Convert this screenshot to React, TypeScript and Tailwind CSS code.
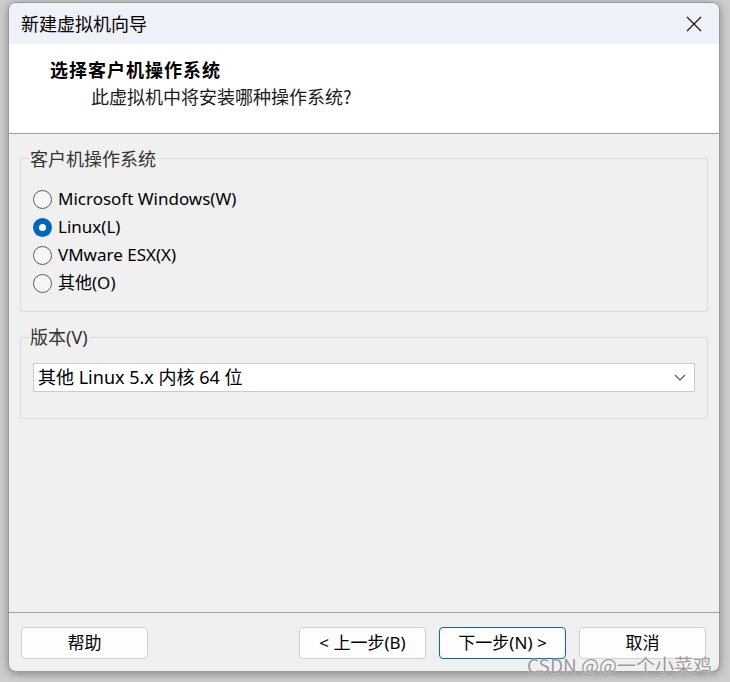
import React from 'react';

const cjk = "font-['Noto_Sans_CJK_SC',sans-serif]";
const ui = "font-['Noto_Sans','Noto_Sans_CJK_SC',sans-serif]";

const options = ['Microsoft Windows(W)', 'Linux(L)', 'VMware ESX(X)', '其他(O)'];

function Radio({ checked }: { checked: boolean }) {
  if (checked) {
    return (
      <span className="flex h-[19px] w-[19px] items-center justify-center rounded-full bg-[#0067c0]">
        <span className="h-[7px] w-[7px] rounded-full bg-white" />
      </span>
    );
  }
  return <span className="h-[19px] w-[19px] rounded-full border border-[#5c5c5c] bg-[#f6f6f6]" />;
}

function Button({ label, primary }: { label: string; primary?: boolean }) {
  return (
    <button
      className={
        'h-[32px] w-[127px] rounded-[4px] border bg-[#fdfdfd] text-[17px] leading-[20px] text-black ' +
        ui +
        (primary ? ' border-[#0067c0]' : ' border-[#d0d0d0]')
      }
    >
      {label}
    </button>
  );
}

export default function App() {
  const selected = 1;

  return (
    <div className="relative h-[682px] w-[730px] overflow-hidden bg-[#cdcdcd]">
      <div className="ml-[8px] mt-[2px] flex h-[670px] w-[712px] flex-col overflow-hidden rounded-[8px] border border-[#9a9a9a] bg-[#f0f0f0] shadow-[0_2px_8px_rgba(0,0,0,0.35)]">
        {/* Title bar */}
        <div className="flex h-[41px] shrink-0 items-center justify-between bg-[#eef1f8] pl-[12px] pr-[16px]">
          <span className={'text-[18px] text-black ' + cjk}>新建虚拟机向导</span>
          <svg width="16" height="16" viewBox="0 0 16 16" className="mr-[1px]">
            <path d="M1 1 L15 15 M15 1 L1 15" stroke="#1a1a1a" strokeWidth="1.3" fill="none" />
          </svg>
        </div>

        {/* Header */}
        <div className="h-[90px] shrink-0 border-b border-[#a0a0a0] bg-white pl-[41px] pt-[13px]">
          <div className={'text-[18px] font-bold leading-[24px] tracking-[1px] text-black ' + cjk}>选择客户机操作系统</div>
          <div className={'ml-[41px] mt-[3px] text-[18px] leading-[24px] text-[#1a1a1a] ' + cjk}>此虚拟机中将安装哪种操作系统?</div>
        </div>

        {/* Body */}
        <div className="flex flex-1 flex-col px-[11px] pt-[12px]">
          <fieldset className="rounded-[2px] border border-[#dadada] pb-[14px] pl-[12px] pr-[12px]">
            <legend className={'-ml-[4px] px-[1px] text-[18px] leading-[24px] text-[#333] ' + cjk}>客户机操作系统</legend>
            <div className="flex flex-col pt-[15px]">
              {options.map((o, i) => (
                <label key={o} className="flex h-[28px] items-center gap-[6px]">
                  <Radio checked={i === selected} />
                  <span className={'text-[17px] text-black ' + ui}>{o}</span>
                </label>
              ))}
            </div>
          </fieldset>

          <fieldset className="mt-[13px] rounded-[2px] border border-[#dadada] pb-[26px] pl-[12px] pr-[12px]">
            <legend className={'-ml-[4px] px-[1px] text-[18px] leading-[24px] text-[#333] ' + ui}>版本(V)</legend>
            <div className="mt-[14px] flex h-[29px] items-center justify-between border border-[#cbcbcb] bg-white pl-[4px] pr-[8px]">
              <span className={'text-[18px] text-black ' + ui}>其他 Linux 5.x 内核 64 位</span>
              <svg width="12" height="7" viewBox="0 0 12 7">
                <path d="M1 1 L6 6 L11 1" stroke="#555" strokeWidth="1.1" fill="none" />
              </svg>
            </div>
          </fieldset>
        </div>

        {/* Footer */}
        <div className="flex h-[59px] shrink-0 items-start border-t border-[#a0a0a0] pl-[12px] pr-[13px] pt-[14px]">
          <Button label="帮助" />
          <div className="ml-auto flex gap-[13px]">
            <Button label="< 上一步(B)" />
            <Button label="下一步(N) >" primary />
            <Button label="取消" />
          </div>
        </div>
      </div>

      <div className={'absolute left-[527px] top-[655px] text-[19px] leading-[19px] text-[#9a9a9a] [text-shadow:0_0_2px_#fff] ' + cjk}>
        CSDN @@一个小菜鸡
      </div>
    </div>
  );
}
